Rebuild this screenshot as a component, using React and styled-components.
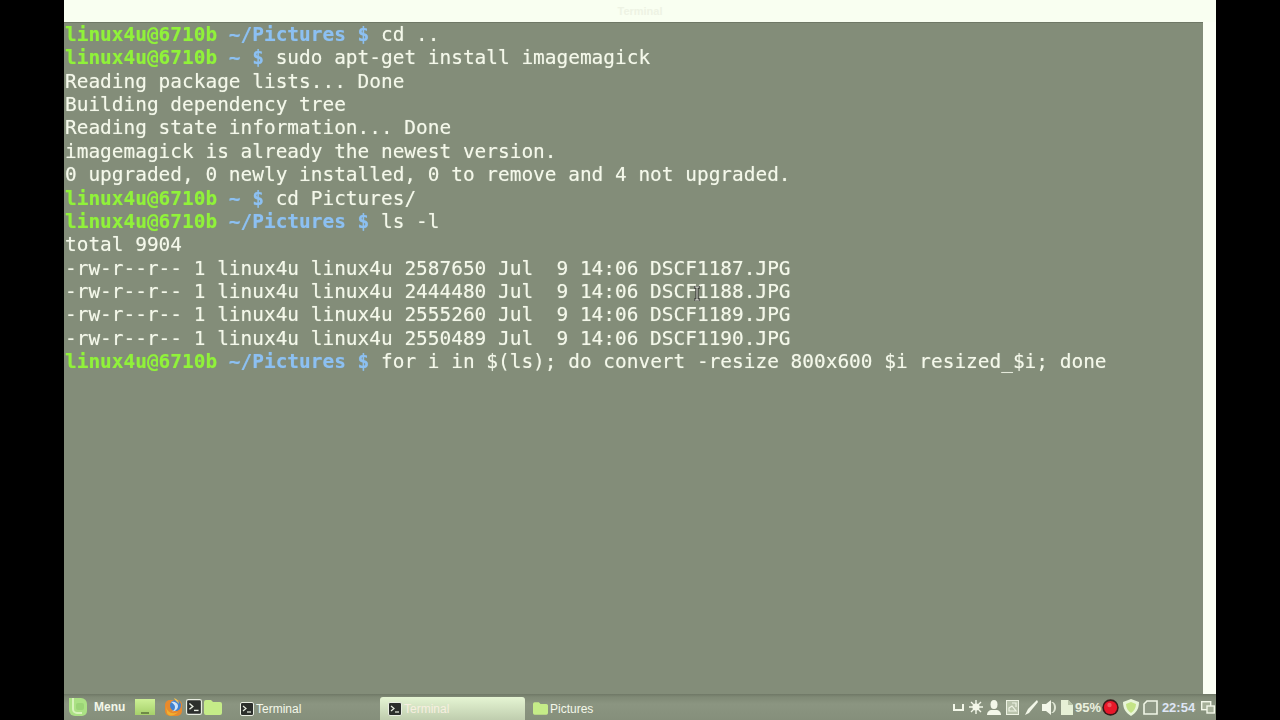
import React from 'react';
import styled, { createGlobalStyle } from 'styled-components';

const Global = createGlobalStyle`
  html, body { margin: 0; padding: 0; background: #000; }
  body { width: 1280px; height: 720px; overflow: hidden; }
`;

const Screen = styled.div`
  width: 1152px;
  height: 720px;
  margin: 0 auto;
  display: flex;
  flex-direction: column;
  background: #f9fff1;
  font-family: "Liberation Sans", sans-serif;
`;

const TitleBar = styled.div`
  height: 22px;
  flex: none;
  display: flex;
  align-items: center;
  justify-content: center;
  font-size: 11px;
  font-weight: bold;
  color: #eef3e4;
`;

const Body = styled.div`
  flex: 1;
  min-height: 0;
  display: flex;
`;

const Term = styled.pre`
  position: relative;
  flex: none;
  width: 1139px;
  margin: 0;
  padding: 1px 0 0 1px;
  box-sizing: border-box;
  background: #838d79;
  box-shadow: inset 0 1px 0 #6f7866;
  font-family: "DejaVu Sans Mono", monospace;
  font-size: 19.44px;
  line-height: 23.37px;
  color: #f4f8ea;
  text-shadow: 0 0 1px rgba(244, 248, 234, 0.55);
  filter: blur(0.4px);
`;

const Row = styled.div`
  height: 23.37px;
  white-space: pre;
`;

const User = styled.span`
  color: #90f23a;
  font-weight: bold;
  text-shadow: 0 0 1px rgba(144, 242, 58, 0.5);
`;

const Path = styled.span`
  color: #8cc0f2;
  font-weight: bold;
  text-shadow: 0 0 1px rgba(140, 192, 242, 0.5);
`;

const Caret = styled.svg`
  position: absolute;
  left: 629px;
  top: 264px;
`;

const Scroll = styled.div`
  flex: 1;
  background: #fbfff4;
`;

const Panel = styled.div`
  height: 26px;
  flex: none;
  display: flex;
  align-items: center;
  background: linear-gradient(#6f7866 0, #7f8975 3px, #8b9581 10px, #858f7b 100%);
  color: #f3f7e9;
  font-size: 12px;
  font-weight: bold;
`;

const MenuBtn = styled.div`
  display: flex;
  align-items: center;
  gap: 6px;
  margin-left: 4px;
  width: 67px;
`;

const Launcher = styled.div`
  display: flex;
  align-items: center;
  width: ${p => p.$w}px;
`;

const Task = styled.div`
  width: ${p => p.$w}px;
  height: 23px;
  margin-top: 3px;
  box-sizing: border-box;
  padding-left: ${p => p.$pad}px;
  display: flex;
  align-items: center;
  gap: 2px;
  border-radius: 3px 3px 0 0;
  font-weight: normal;
  background: ${p => (p.$active ? 'linear-gradient(#e5f5d3, #bfcdae)' : 'none')};
  color: ${p => (p.$active ? '#f7efe0' : '#f3f7e9')};
`;

const Tray = styled.div`
  margin-left: auto;
  display: flex;
  align-items: center;
  height: 100%;
`;

const TraySlot = styled.div`
  display: flex;
  align-items: center;
  justify-content: center;
  width: ${p => p.$w}px;
  font-size: ${p => p.$fs || 12}px;
  color: ${p => p.$c || 'inherit'};
`;

const MintIcon = () => (
  <svg width="20" height="20" viewBox="0 0 20 20">
    <path d="M1 1h12a6 6 0 0 1 6 6v7a5 5 0 0 1-5 5H7a6 6 0 0 1-6-6z" fill="#abe184" />
    <path d="M5 1v11a4 4 0 0 0 4 4h5" fill="none" stroke="#d8f3bb" strokeWidth="2" />
    <rect x="8" y="6" width="8" height="7" rx="2" fill="#9bd476" />
  </svg>
);

const ShowDesktop = () => (
  <svg width="20" height="18" viewBox="0 0 20 18">
    <defs>
      <linearGradient id="desk" x1="0" y1="0" x2="0" y2="1">
        <stop offset="0" stopColor="#cdf096" />
        <stop offset="1" stopColor="#a5d06a" />
      </linearGradient>
    </defs>
    <rect x="0" y="1" width="20" height="16" fill="url(#desk)" />
    <rect x="6" y="14" width="8" height="2" fill="#6e8a48" />
  </svg>
);

const Firefox = () => (
  <svg width="18" height="19" viewBox="0 0 18 19">
    <rect x="0" y="2" width="17" height="16" rx="5" fill="#e88a2c" />
    <circle cx="10.5" cy="7.5" r="5.5" fill="#3f82d0" />
    <path d="M6 4c3-1 7 1 7 4s-3 6-6 5c2 0 3-2 3-4s-2-4-4-5z" fill="#cfe3f6" />
    <path d="M1 8c1 6 6 9 12 6-3 4-9 5-11 1z" fill="#f0b030" />
    <path d="M9 0c3 1 5 3 5 6-1-2-4-3-5-6z" fill="#f2c050" />
  </svg>
);

const TermIcon = ({ size = 14 }) => (
  <svg width={size} height={size} viewBox="0 0 14 14">
    <rect x="0.5" y="0.5" width="13" height="13" rx="1.5" fill="#2c2f2c" stroke="#e9eee2" />
    <path d="M3 4l3 2.5L3 9" fill="none" stroke="#e9eee2" strokeWidth="1.2" />
    <path d="M7 10h4" stroke="#e9eee2" strokeWidth="1.2" />
  </svg>
);

const Folder = ({ w = 18 }) => (
  <svg width={w} height="15" viewBox="0 0 18 15">
    <path d="M0 2a2 2 0 0 1 2-2h5l2 2h7a2 2 0 0 1 2 2v9a2 2 0 0 1-2 2H2a2 2 0 0 1-2-2z" fill="#c5ec88" />
  </svg>
);

const Battery = () => (
  <svg width="14" height="17" viewBox="0 0 14 17">
    <path d="M1 1h7l5 5v10H1z" fill="#e6f0d6" />
    <path d="M8 1v5h5z" fill="#b8c4a8" />
  </svg>
);

const RecDot = () => (
  <svg width="17" height="17" viewBox="0 0 17 17">
    <circle cx="8.5" cy="8.5" r="8.2" fill="#3c1a1a" />
    <circle cx="8.5" cy="8.5" r="6.6" fill="#e8182a" />
    <circle cx="7.5" cy="6" r="2.2" fill="#f0555e" />
  </svg>
);

const Shield = () => (
  <svg width="16" height="17" viewBox="0 0 16 17">
    <path d="M8 0l8 3c0 7-3 11-8 14C3 14 0 10 0 3z" fill="#e9f5d8" />
    <path d="M8 3l5 2c0 4-2 7-5 9-3-2-5-5-5-9z" fill="#c4e486" />
  </svg>
);

const Card = () => (
  <svg width="15" height="15" viewBox="0 0 15 15">
    <path d="M4 1h10v13H1V4z" fill="#8f9986" stroke="#f0f5e6" strokeWidth="1.6" />
  </svg>
);

const Tray1 = () => (
  <svg width="11" height="8" viewBox="0 0 11 8">
    <path d="M0 1v7h11V1H9v5H2V1z" fill="#f3f7e9" />
  </svg>
);

const Sun = () => (
  <svg width="14" height="14" viewBox="0 0 14 14">
    <circle cx="7" cy="7" r="3.6" fill="#f3f7e9" />
    <path d="M7 0v14M0 7h14M2 2l10 10M12 2L2 12" stroke="#f3f7e9" strokeWidth="1.4" />
  </svg>
);

const Person = () => (
  <svg width="14" height="15" viewBox="0 0 14 15">
    <ellipse cx="7" cy="4.5" rx="3.5" ry="4.5" fill="#f3f7e9" />
    <path d="M0 15c0-3 2-5 5-5h4c3 0 5 2 5 5z" fill="#f3f7e9" />
  </svg>
);

const Note = () => (
  <svg width="13" height="15" viewBox="0 0 13 15">
    <rect x="0.5" y="0.5" width="12" height="14" fill="#b9c3ac" stroke="#eef3e4" />
    <path d="M6 3h4v4M3 8l3-2 4 5H3z" stroke="#eef3e4" fill="none" strokeWidth="1.2" />
  </svg>
);

const Pen = () => (
  <svg width="13" height="15" viewBox="0 0 13 15">
    <path d="M12 0L3 9l-3 6 4-2 9-11z" fill="#f3f7e9" />
  </svg>
);

const Volume = () => (
  <svg width="15" height="15" viewBox="0 0 15 15">
    <path d="M0 4h4l5-4v15l-5-4H0z" fill="#f3f7e9" />
    <path d="M9 2c4 1 4 10 0 11h2c4-2 4-9 0-11z" fill="#dfe6d4" />
  </svg>
);

const Windows = () => (
  <svg width="14" height="13" viewBox="0 0 14 13">
    <rect x="0.7" y="0.7" width="9" height="8" fill="#a5af98" stroke="#f3f7e9" strokeWidth="1.4" />
    <rect x="6" y="5" width="7.3" height="7" fill="#a5af98" stroke="#f3f7e9" strokeWidth="1.4" />
  </svg>
);

const prompt = (path, cmd) => (
  <>
    <User>linux4u@6710b</User> <Path>{path} $</Path> {cmd}
  </>
);

const listing = [
  '2587650 Jul  9 14:06 DSCF1187.JPG',
  '2444480 Jul  9 14:06 DSCF1188.JPG',
  '2555260 Jul  9 14:06 DSCF1189.JPG',
  '2550489 Jul  9 14:06 DSCF1190.JPG',
];

const App = () => (
  <>
    <Global />
    <Screen>
      <TitleBar>Terminal</TitleBar>
      <Body>
        <Term>
          <Row>{prompt('~/Pictures', 'cd ..')}</Row>
          <Row>{prompt('~', 'sudo apt-get install imagemagick')}</Row>
          <Row>Reading package lists... Done</Row>
          <Row>Building dependency tree</Row>
          <Row>Reading state information... Done</Row>
          <Row>imagemagick is already the newest version.</Row>
          <Row>0 upgraded, 0 newly installed, 0 to remove and 4 not upgraded.</Row>
          <Row>{prompt('~', 'cd Pictures/')}</Row>
          <Row>{prompt('~/Pictures', 'ls -l')}</Row>
          <Row>total 9904</Row>
          {listing.map(l => (
            <Row key={l}>-rw-r--r-- 1 linux4u linux4u {l}</Row>
          ))}
          <Row>{prompt('~/Pictures', 'for i in $(ls); do convert -resize 800x600 $i resized_$i; done')}</Row>
          <Caret width="8" height="15" viewBox="0 0 8 15">
            <path d="M1 1h6M1 14h6M4 1v13" stroke="#2a2a2a" strokeWidth="3" fill="none" />
            <path d="M1.5 1h5M1.5 14h5M4 1v13" stroke="#f4f8ea" strokeWidth="1" fill="none" />
          </Caret>
        </Term>
        <Scroll />
      </Body>
      <Panel>
        <MenuBtn><MintIcon />Menu</MenuBtn>
        <Launcher $w={30}><ShowDesktop /></Launcher>
        <Launcher $w={21}><Firefox /></Launcher>
        <Launcher $w={18}><TermIcon size={16} /></Launcher>
        <Launcher $w={34}><Folder /></Launcher>
        <Task $w={142} $pad={2}><TermIcon />Terminal</Task>
        <Task $w={145} $pad={8} $active><TermIcon />Terminal</Task>
        <Task $w={140} $pad={8}><Folder w={15} />Pictures</Task>
        <Tray>
          <TraySlot $w={18}><Tray1 /></TraySlot>
          <TraySlot $w={18}><Sun /></TraySlot>
          <TraySlot $w={18}><Person /></TraySlot>
          <TraySlot $w={19}><Note /></TraySlot>
          <TraySlot $w={18}><Pen /></TraySlot>
          <TraySlot $w={19}><Volume /></TraySlot>
          <TraySlot $w={16}><Battery /></TraySlot>
          <TraySlot $w={26} $fs={13} $c="#eaf0de">95%</TraySlot>
          <TraySlot $w={18}><RecDot /></TraySlot>
          <TraySlot $w={23}><Shield /></TraySlot>
          <TraySlot $w={16}><Card /></TraySlot>
          <TraySlot $w={41} $fs={13} $c="#dfe6f6">22:54</TraySlot>
          <TraySlot $w={17}><Windows /></TraySlot>
        </Tray>
      </Panel>
    </Screen>
  </>
);

export default App;
